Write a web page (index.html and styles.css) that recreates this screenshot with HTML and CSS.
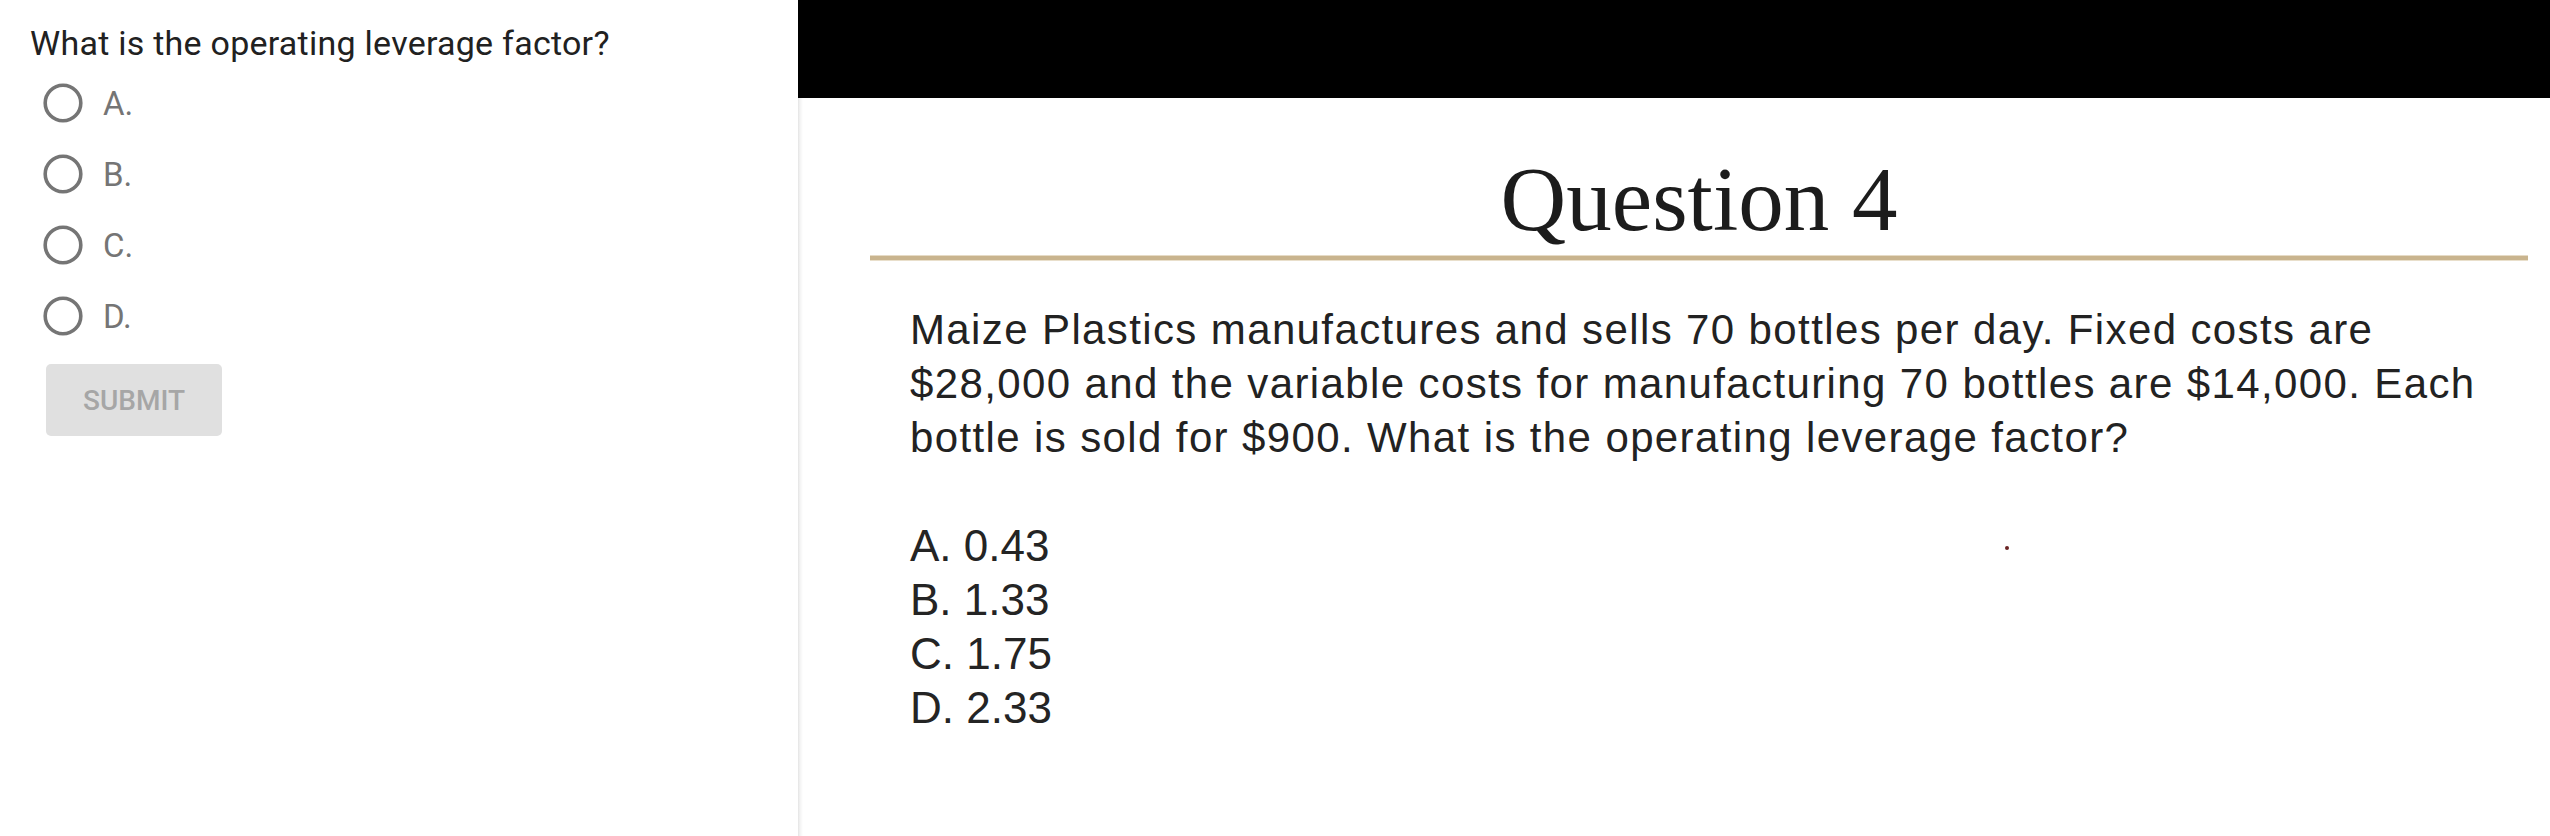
FILE: index.html
```html
<!DOCTYPE html>
<html lang="en">
<head>
<meta charset="utf-8">
<title>Question 4</title>
<link rel="stylesheet" href="styles.css">
</head>
<body>
<div class="page">
  <section class="quiz">
    <p class="quiz-question">What is the operating leverage factor?</p>
    <ul class="choices">
      <li class="choice"><svg class="radio" viewBox="0 0 40 40" width="40" height="40"><circle cx="20" cy="20" r="17.8" fill="none" stroke="#757575" stroke-width="3.6"/></svg><span class="choice-label">A.</span></li>
      <li class="choice"><svg class="radio" viewBox="0 0 40 40" width="40" height="40"><circle cx="20" cy="20" r="17.8" fill="none" stroke="#757575" stroke-width="3.6"/></svg><span class="choice-label">B.</span></li>
      <li class="choice"><svg class="radio" viewBox="0 0 40 40" width="40" height="40"><circle cx="20" cy="20" r="17.8" fill="none" stroke="#757575" stroke-width="3.6"/></svg><span class="choice-label">C.</span></li>
      <li class="choice"><svg class="radio" viewBox="0 0 40 40" width="40" height="40"><circle cx="20" cy="20" r="17.8" fill="none" stroke="#757575" stroke-width="3.6"/></svg><span class="choice-label">D.</span></li>
    </ul>
    <button class="submit" type="button" disabled>SUBMIT</button>
  </section>
  <section class="slide">
    <div class="slide-bar"></div>
    <div class="slide-body">
      <div class="slide-content">
        <h1 class="slide-title">Question 4</h1>
        <div class="slide-rule"></div>
        <p class="slide-text">Maize Plastics manufactures and sells 70 bottles per day. Fixed costs are $28,000 and the variable costs for manufacturing 70 bottles are $14,000. Each bottle is sold for $900. What is the operating leverage factor?</p>
        <ul class="slide-options">
          <li>A. 0.43</li>
          <li>B. 1.33</li>
          <li>C. 1.75</li>
          <li>D. 2.33</li>
        </ul>
      </div>
      <span class="cursor-dot"></span>
    </div>
  </section>
</div>
</body>
</html>
```

FILE: styles.css
```css
html, body {
  margin: 0;
  padding: 0;
  background: #ffffff;
}

.page {
  display: flex;
  width: 2550px;
  height: 836px;
  overflow: hidden;
}

.quiz {
  width: 798px;
  flex: none;
  box-sizing: border-box;
  padding: 23px 0 0 30px;
  font-family: Roboto, "Liberation Sans", sans-serif;
}

.quiz-question {
  margin: 0;
  font-size: 34px;
  letter-spacing: 0.25px;
  line-height: 40px;
  color: #212121;
}

.choices {
  list-style: none;
  margin: 4px 0 0 0;
  padding: 0 0 0 13px;
}

.choice {
  display: flex;
  align-items: center;
  height: 71px;
  gap: 20px;
}

.radio {
  display: block;
  flex: none;
}

.choice-label {
  font-size: 33px;
  line-height: 40px;
  padding-top: 3px;
  color: #757575;
}

.submit {
  display: block;
  margin: 13px 0 0 16px;
  width: 176px;
  height: 72px;
  border: none;
  border-radius: 5px;
  background: #e0e0e0;
  color: #a6a6a6;
  font-family: Roboto, "Liberation Sans", sans-serif;
  font-weight: 500;
  font-size: 28px;
  letter-spacing: 0;
  padding: 0;
}

.slide {
  flex: 1;
  display: flex;
  flex-direction: column;
}

.slide-bar {
  height: 98px;
  background: #000000;
  flex: none;
}

.slide-body {
  flex: 1;
  position: relative;
  background: linear-gradient(to right, #e4e4e4 0, #f3f3f3 2px, #ffffff 5px);
  padding: 0 22px 0 72px;
}

.slide-content {
  display: flex;
  flex-direction: column;
}

.slide-title {
  margin: 52px 0 0 0;
  font-family: "Liberation Serif", "Times New Roman", serif;
  font-weight: 400;
  font-size: 91px;
  line-height: 100px;
  color: #1c1c1c;
  text-align: center;
}

.slide-rule {
  margin-top: 6px;
  height: 4px;
  background: #c9b48e;
  box-shadow: 0 -1px 0 #e6dbc6, 0 1px 0 #e9dfcb;
}

.slide-text {
  margin: 43px 0 0 0;
  padding: 0 18px 0 40px;
  font-family: "Liberation Sans", Arial, sans-serif;
  font-size: 42px;
  letter-spacing: 1.38px;
  line-height: 54px;
  color: #222222;
}

.slide-options {
  list-style: none;
  margin: 54px 0 0 0;
  padding: 0 0 0 40px;
  font-family: "Liberation Sans", Arial, sans-serif;
  font-size: 44px;
  line-height: 54px;
  color: #242424;
}

.cursor-dot {
  position: absolute;
  left: 1207px;
  top: 448px;
  width: 4px;
  height: 4px;
  border-radius: 50%;
  background: #6a2424;
}
```
